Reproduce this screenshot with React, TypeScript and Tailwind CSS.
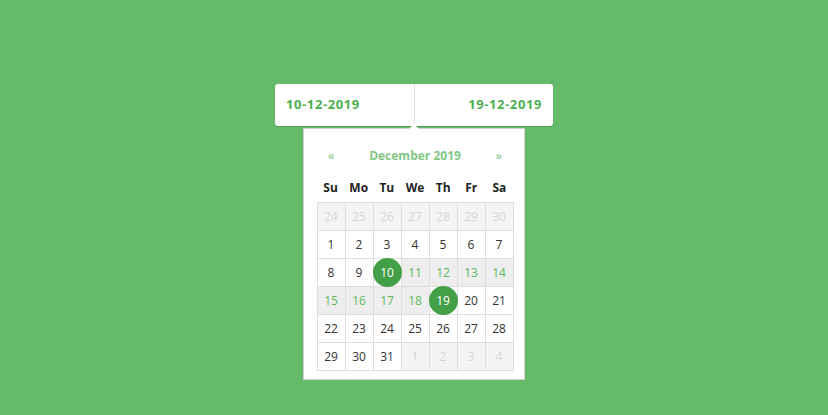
const weekDays = ["Su", "Mo", "Tu", "We", "Th", "Fr", "Sa"];

type Day = {
  label: number;
  muted?: boolean;
  inRange?: boolean;
  selected?: boolean;
};

const buildDays = (): Day[] => {
  const days: Day[] = [];
  for (let d = 24; d <= 30; d++) days.push({ label: d, muted: true });
  for (let d = 1; d <= 31; d++) {
    days.push({
      label: d,
      selected: d === 10 || d === 19,
      inRange: d > 10 && d < 19,
    });
  }
  for (let d = 1; d <= 4; d++) days.push({ label: d, muted: true });
  return days;
};

const DayCell = ({ label, muted, inRange, selected }: Day) => {
  let cls = "bg-white text-[#333]";
  if (muted) cls = "bg-[#f4f4f4] text-[#d6d6d6]";
  if (inRange) cls = "bg-[#eeeeee] text-[#5cb860]";

  return (
    <div
      className={`relative flex h-[28px] w-[28px] items-center justify-center border-r border-b border-[#dddddd] text-[12px] ${cls}`}
    >
      {selected ? (
        <div className="absolute -inset-[1px] z-10 flex items-center justify-center rounded-full bg-[#43a047] text-white">
          {label}
        </div>
      ) : (
        label
      )}
    </div>
  );
};

export default function App() {
  const days = buildDays();

  return (
    <div
      className="flex h-[415px] w-full flex-col items-center bg-[#66bb6a] pt-[84px]"
      style={{ fontFamily: '"Open Sans", sans-serif' }}
    >
      <div className="relative flex h-[42px] w-[278px] rounded-[3px] bg-white shadow-[0_1px_1px_rgba(0,0,0,0.18)]">
        <div className="flex flex-1 items-center pl-[11px] text-[13px] font-bold tracking-[0.6px] text-[#4caf50]">
          10-12-2019
        </div>
        <div className="w-px bg-[#dedede]" />
        <div className="flex flex-1 items-center justify-end pr-[11px] text-[13px] font-bold tracking-[0.6px] text-[#4caf50]">
          19-12-2019
        </div>
        {/* little arrow pointing at the popup */}
        <div className="absolute left-1/2 -bottom-[3px] z-10 h-0 w-0 -translate-x-1/2 border-x-[5px] border-b-[5px] border-x-transparent border-b-white" />
      </div>

      <div className="mt-[2px] flex w-[222px] flex-col items-center border border-[#cfcfcf] bg-white pt-[17px] pb-[8px] pl-[2px]">
        <div className="flex h-[20px] w-[196px] items-center justify-between px-[11px] text-[#81c784]">
          <span className="text-[13px]">«</span>
          <span className="text-[12px] font-bold">December 2019</span>
          <span className="text-[13px]">»</span>
        </div>

        <div className="mt-[12px] grid h-[20px] w-[197px] grid-cols-7 items-center text-center text-[12px] font-bold text-[#222]">
          {weekDays.map((w) => (
            <span key={w}>{w}</span>
          ))}
        </div>

        <div className="mt-[4px] grid w-[197px] grid-cols-7 border-t border-l border-[#dddddd]">
          {days.map((d, i) => (
            <DayCell key={i} {...d} />
          ))}
        </div>
      </div>
    </div>
  );
}
